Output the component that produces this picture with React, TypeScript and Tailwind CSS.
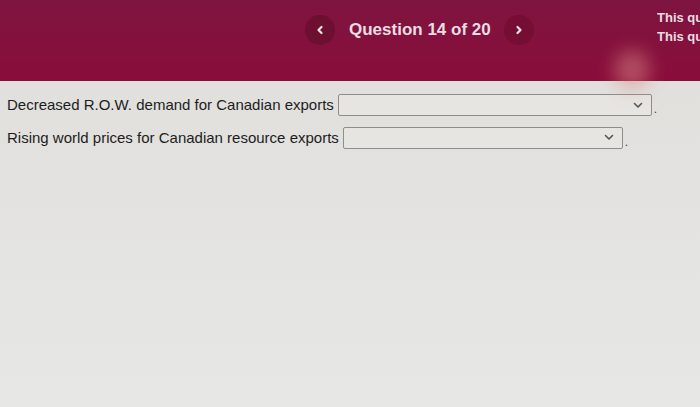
import React from 'react';

const rows = [
  { label: 'Decreased R.O.W. demand for Canadian exports', width: 'w-[314px]' },
  { label: 'Rising world prices for Canadian resource exports', width: 'w-[280px]' },
];

function Chevron({ dir }: { dir: 'left' | 'right' }) {
  return (
    <svg width="8" height="10" viewBox="0 0 8 10" fill="none">
      <path
        d={dir === 'left' ? 'M5.5 2 L2.5 5 L5.5 8' : 'M2.5 2 L5.5 5 L2.5 8'}
        stroke="#f1e4e8"
        strokeWidth="2.2"
        strokeLinecap="round"
        strokeLinejoin="round"
      />
    </svg>
  );
}

function SelectBox({ width }: { width: string }) {
  return (
    <div className="flex items-end gap-[2px]">
      <div
        className={`${width} h-[22px] flex items-center justify-end pr-[8px] border border-[#8d8d8a] rounded-[2px] bg-[#e6e5e1]`}
      >
        <svg width="10" height="7" viewBox="0 0 10 7" fill="none">
          <path d="M1.5 1.5 L5 5 L8.5 1.5" stroke="#555" strokeWidth="1.6" strokeLinecap="round" strokeLinejoin="round" />
        </svg>
      </div>
      <span className="text-[12px] leading-[14px] text-[#444]">.</span>
    </div>
  );
}

export default function App() {
  return (
    <div
      className="w-[700px] h-[407px] overflow-hidden bg-gradient-to-b from-[#dfdedb] to-[#e7e7e5]"
      style={{ fontFamily: '"Liberation Sans", Arial, sans-serif' }}
    >
      {/* Header band */}
      <header className="relative h-[81px] bg-gradient-to-b from-[#7e1440] to-[#8a0c3a] flex items-start">
        <div className="flex items-center pl-[305px] pt-[15px]">
          <button className="w-[30px] h-[30px] rounded-full bg-[#6c0f31] flex items-center justify-center">
            <Chevron dir="left" />
          </button>
          <span className="ml-[14px] text-[17px] font-bold text-[#ebdde2]">Question 14 of 20</span>
          <button className="ml-[13px] w-[30px] h-[30px] rounded-full bg-[#760d33] flex items-center justify-center">
            <Chevron dir="right" />
          </button>
        </div>
        <div className="ml-auto pt-[8px] w-[43px] overflow-hidden whitespace-nowrap text-[13px] leading-[19px] font-bold text-[#ebdde2]">
          <div>This qu</div>
          <div>This qu</div>
        </div>
        {/* light glare */}
        <div className="absolute left-[614px] top-[50px] w-[36px] h-[40px] rounded-full bg-[#d98a86] opacity-50 blur-[9px]" />
      </header>

      {/* Question rows */}
      <div className="flex flex-col gap-[10px] pt-[13px] pl-[7px] text-[15px] text-[#1d1d1d]">
        {rows.map((r) => (
          <div key={r.label} className="flex items-center gap-[4px]">
            <span>{r.label}</span>
            <SelectBox width={r.width} />
          </div>
        ))}
      </div>
    </div>
  );
}
